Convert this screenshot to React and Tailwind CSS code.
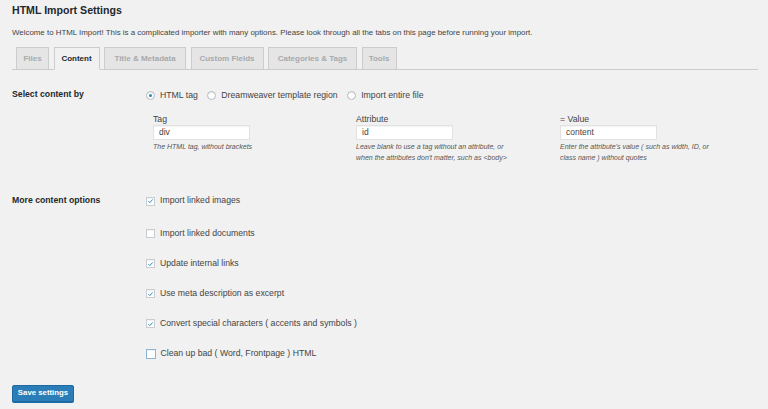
import { useState } from 'react'

const tabs = [
  { name: 'Files', w: 'w-[33px]' },
  { name: 'Content', w: 'w-[46px]' },
  { name: 'Title & Metadata', w: 'w-[82px]' },
  { name: 'Custom Fields', w: 'w-[73px]' },
  { name: 'Categories & Tags', w: 'w-[89px]' },
  { name: 'Tools', w: 'w-[35px]' },
]

const options = [
  { label: 'Import linked images', checked: true },
  { label: 'Import linked documents', checked: false },
  { label: 'Update internal links', checked: true },
  { label: 'Use meta description as excerpt', checked: true },
  { label: 'Convert special characters ( accents and symbols )', checked: true },
  { label: 'Clean up bad ( Word, Frontpage ) HTML', checked: false, focus: true },
]

function Radio({ checked, label }) {
  return (
    <label className="flex items-center gap-[5px]">
      <span className="w-[9px] h-[9px] rounded-full bg-white border border-[#b4b9be] shadow-[inset_0_1px_1px_rgba(0,0,0,0.08)] flex items-center justify-center">
        {checked && <span className="w-[3px] h-[3px] rounded-full bg-[#1e8cbe]" />}
      </span>
      <span>{label}</span>
    </label>
  )
}

function Checkbox({ checked, label, focus }) {
  return (
    <label className="flex items-center gap-[5px] h-[10px]">
      <span
        className={`flex items-center justify-center bg-white border ${
          focus ? 'w-[10px] h-[10px] border-[#8bb5d6] ml-[-0.5px]' : 'w-[9px] h-[9px] border-[#c9ccd0]'
        } shadow-[inset_0_1px_1px_rgba(0,0,0,0.06)]`}
      >
        {checked && (
          <svg viewBox="0 0 10 10" className="w-[8px] h-[8px]">
            <path d="M2 5.2 L4.1 7.3 L8 2.8" fill="none" stroke="#1e8cbe" strokeWidth="1.4" />
          </svg>
        )}
      </span>
      <span>{label}</span>
    </label>
  )
}

function Field({ label, value, help }) {
  return (
    <div className="flex flex-col">
      <div className="leading-[10px] mb-[1px] mt-[1px]">{label}</div>
      <div className="w-[97px] h-[15px] bg-white border border-[#e2e2e2] shadow-[inset_0_1px_1px_rgba(0,0,0,0.05)] px-[5px] flex items-center text-[8.5px]">
        {value}
      </div>
      <div className="italic text-[7px] leading-[10.5px] mt-[2px] text-[#555]">{help}</div>
    </div>
  )
}

export default function App() {
  const [active] = useState('Content')

  return (
    <div
      className="w-[768px] h-[409px] bg-[#f1f1f1] text-[#444] text-[8.7px] overflow-hidden pl-[12px] pr-[10px]"
      style={{ fontFamily: '"Liberation Sans", Arial, sans-serif' }}
    >
      <h1 className="text-[10.6px] font-bold text-[#23282d] pt-[3px] leading-[14px]">HTML Import Settings</h1>
      <p className="mt-[11px] leading-[10px] text-[#444] text-[7.9px]">
        Welcome to HTML Import! This is a complicated importer with many options. Please look through all the tabs on this page before running your import.
      </p>

      {/* Tabs */}
      <div className="mt-[9px] flex items-end gap-[4.5px] pl-[4px] border-b border-[#ccc] w-[746px]">
        {tabs.map(t => (
          <div
            key={t.name}
            className={`${t.w} h-[23px] -mb-px flex items-center justify-center whitespace-nowrap font-bold text-[8px] border border-[#ccc] ${
              t.name === active ? 'bg-[#f1f1f1] text-[#23282d] border-b-[#f1f1f1]' : 'bg-[#e5e5e5] text-[#a7aaad]'
            }`}
          >
            {t.name}
          </div>
        ))}
      </div>

      {/* Select content by */}
      <div className="flex mt-[19px]">
        <div className="w-[134px] shrink-0 font-bold text-[#23282d] leading-[10px]">Select content by</div>
        <div className="flex flex-col">
          <div className="flex items-center gap-[9.5px] leading-[10px] mt-[1px]">
            <Radio checked label="HTML tag" />
            <Radio label="Dreamweaver template region" />
            <Radio label="Import entire file" />
          </div>
          <div className="grid grid-cols-[203px_204px_190px] pl-[7px] mt-[13px]">
            <Field label="Tag" value="div" help="The HTML tag, without brackets" />
            <Field
              label="Attribute"
              value="id"
              help={<>Leave blank to use a tag without an attribute, or<br />when the attributes don't matter, such as &lt;body&gt;</>}
            />
            <Field
              label="= Value"
              value="content"
              help={<>Enter the attribute's value ( such as width, ID, or<br />class name ) without quotes</>}
            />
          </div>
        </div>
      </div>

      {/* More content options */}
      <div className="flex mt-[32px]">
        <div className="w-[134px] shrink-0 font-bold text-[#23282d] leading-[10px]">More content options</div>
        <div className="flex flex-col gap-[20px] mt-[1px]">
          {options.map((o, i) => (
            <div key={o.label} className={i === 0 ? 'mb-[2.5px]' : ''}>
              <Checkbox {...o} />
            </div>
          ))}
        </div>
      </div>

      <button className="mt-[26px] w-[62px] h-[17px] rounded-[2px] bg-[#2b7db8] border border-[#1d6aa3] text-white font-bold text-[7.8px] shadow-[0_1px_0_#1d6aa3]">
        Save settings
      </button>
    </div>
  )
}
